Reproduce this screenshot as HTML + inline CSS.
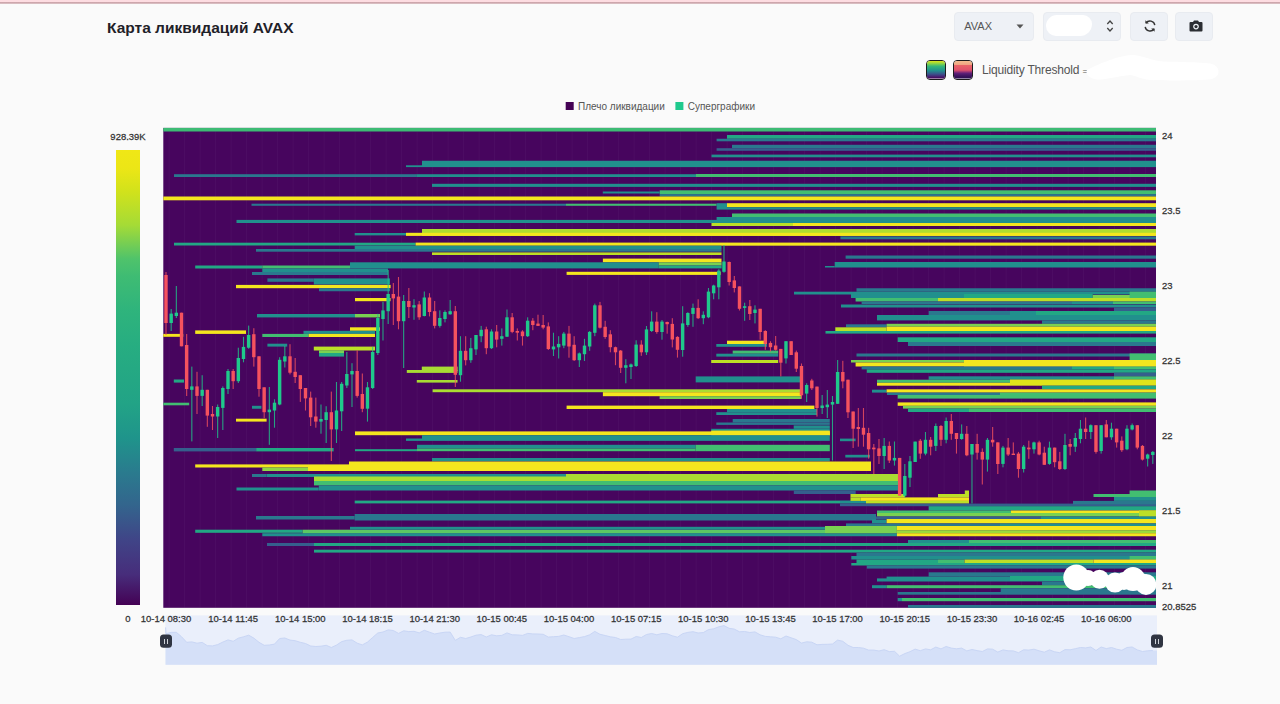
<!DOCTYPE html>
<html><head><meta charset="utf-8"><title>Карта ликвидаций AVAX</title>
<style>
html,body{margin:0;padding:0;}
body{width:1280px;height:704px;overflow:hidden;background:#fafafa;font-family:"Liberation Sans",sans-serif;position:relative;}
.topline{position:absolute;left:0;top:0;width:1280px;height:4.2px;background:linear-gradient(to bottom,#fddce1 0,#fddce1 2px,#cda6ac 2.2px,#cfa9af 3.3px,#ebe2e3 3.9px,#fafafa 4.2px);}
h1{position:absolute;left:107px;top:17.6px;margin:0;font-size:15.5px;line-height:20px;font-weight:bold;color:#1f2128;letter-spacing:0.01px;white-space:nowrap;}
.ctl{position:absolute;top:12px;height:28.6px;background:#eef1f6;border-radius:4px;border:1px solid #e8ebf0;box-sizing:border-box;}
.ctl span{position:absolute;font-size:11px;color:#555;top:7px;line-height:13px}
.thr{position:absolute;left:982px;top:63px;font-size:12px;line-height:14px;color:#555;white-space:nowrap;letter-spacing:-0.17px}
.thr i{font-style:normal;font-size:8.5px;position:relative;top:-0.5px}
.sw{position:absolute;top:60.3px;width:20px;height:19.5px;border-radius:4px;box-sizing:border-box;border:1.8px solid #1c1c1c;}
.blob{position:absolute;background:#fff;border-radius:50%;}
</style></head><body>
<div class="topline"></div>
<h1>Карта ликвидаций AVAX</h1>
<div class="ctl" style="left:954.3px;width:80px;"><span style="left:9px">AVAX</span>
<svg style="position:absolute;left:61px;top:11px" width="8" height="5" viewBox="0 0 8 5"><path d="M0.5 0.5 L7.5 0.5 L4 4.5 Z" fill="#555"/></svg></div>
<div class="ctl" style="left:1042.6px;width:78.6px;">
<div class="blob" style="left:2.5px;top:2.2px;width:46px;height:21px;border-radius:11px 9px 12px 10px"></div>
<svg style="position:absolute;left:62.5px;top:5.5px" width="8" height="14" viewBox="0 0 8 14"><path d="M1.3 5 L4 2 L6.7 5 M1.3 9 L4 12 L6.7 9" fill="none" stroke="#444" stroke-width="1.3"/></svg></div>
<div class="ctl" style="left:1130px;width:38.3px;">
<svg style="position:absolute;left:12px;top:6px" width="14" height="14" viewBox="0 0 14 14"><g transform="translate(14,0) scale(-1,1)"><path d="M2.2 6.2 A4.9 4.9 0 0 1 11 4 M11.8 7.8 A4.9 4.9 0 0 1 3 10" fill="none" stroke="#333" stroke-width="1.4"/><path d="M11.6 1.2 L11.6 4.6 L8.2 4.6 Z M2.4 12.8 L2.4 9.4 L5.8 9.4 Z" fill="#333"/></g></svg></div>
<div class="ctl" style="left:1174.6px;width:38.3px;">
<svg style="position:absolute;left:13px;top:7.3px" width="14" height="12" viewBox="0 0 14 12"><path d="M0.5 3 Q0.5 2 1.5 2 L4 2 L5 0.5 L9 0.5 L10 2 L12.5 2 Q13.5 2 13.5 3 L13.5 10.5 Q13.5 11.5 12.5 11.5 L1.5 11.5 Q0.5 11.5 0.5 10.5 Z" fill="#2b2e33"/><circle cx="7" cy="6.6" r="2.8" fill="#eff2f6"/><circle cx="7" cy="6.6" r="1.6" fill="#2b2e33"/></svg></div>
<svg class="sw" style="left:926px;" viewBox="0 0 20 20" preserveAspectRatio="none"><rect width="20" height="20" fill="url(#sw1)"/></svg>
<svg class="sw" style="left:953.4px;" viewBox="0 0 20 20" preserveAspectRatio="none"><rect width="20" height="20" fill="url(#sw2)"/></svg>
<div class="thr">Liquidity Threshold <i>=</i></div>
<svg style="position:absolute;left:0;top:0" width="1280" height="100"><path d="M1087 70 C1095 66 1115 56 1132 55 C1142 55 1152 61 1163 61.5 C1180 62 1198 62 1210 63.5 C1220 65 1222 76 1212 79 C1195 81 1165 80.5 1150 80 C1140 79 1135 75 1130 75 C1120 76 1105 80 1097 79.5 C1090 79 1085 74 1087 70 Z" fill="#fff"/></svg>
<svg width="1280" height="704" viewBox="0 0 1280 704" style="position:absolute;left:0;top:0">
<defs>
<linearGradient id="vir" x1="0" y1="0" x2="0" y2="1">
<stop offset="0" stop-color="#f0e716"/><stop offset="0.04" stop-color="#ece616"/><stop offset="0.09" stop-color="#d2e21b"/><stop offset="0.165" stop-color="#a5db36"/><stop offset="0.24" stop-color="#4fc36b"/><stop offset="0.277" stop-color="#3fbc73"/><stop offset="0.35" stop-color="#2fb47c"/><stop offset="0.43" stop-color="#27ad81"/><stop offset="0.558" stop-color="#22a386"/><stop offset="0.633" stop-color="#1f948b"/><stop offset="0.708" stop-color="#2a7b8e"/><stop offset="0.78" stop-color="#33658d"/><stop offset="0.858" stop-color="#404487"/><stop offset="0.933" stop-color="#472d7b"/><stop offset="1" stop-color="#440154"/>
</linearGradient>
<linearGradient id="sw1" x1="0" y1="0" x2="0" y2="1"><stop offset="0" stop-color="#dfe318"/><stop offset="0.12" stop-color="#9bd93c"/><stop offset="0.3" stop-color="#35b779"/><stop offset="0.55" stop-color="#21908d"/><stop offset="0.75" stop-color="#3b528b"/><stop offset="0.9" stop-color="#481f70"/><stop offset="1" stop-color="#440154"/></linearGradient>
<linearGradient id="sw2" x1="0" y1="0" x2="0" y2="1"><stop offset="0" stop-color="#f3bd8e"/><stop offset="0.2" stop-color="#f1a583"/><stop offset="0.24" stop-color="#ea6468"/><stop offset="0.52" stop-color="#e0526b"/><stop offset="0.6" stop-color="#a83a74"/><stop offset="0.7" stop-color="#5f2078"/><stop offset="0.85" stop-color="#3d1460"/><stop offset="1" stop-color="#2a0f50"/></linearGradient>
</defs>
<rect x="163.3" y="127.9" width="992.7" height="479.9" fill="#47055e"/>
<rect x="168.6" y="131.5" width="1" height="476" fill="#fff" fill-opacity="0.035"/>
<rect x="184.1" y="131.5" width="1" height="476" fill="#fff" fill-opacity="0.035"/>
<rect x="199.6" y="131.5" width="1" height="476" fill="#fff" fill-opacity="0.035"/>
<rect x="215.1" y="131.5" width="1" height="476" fill="#fff" fill-opacity="0.035"/>
<rect x="230.6" y="131.5" width="1" height="476" fill="#fff" fill-opacity="0.035"/>
<rect x="246.1" y="131.5" width="1" height="476" fill="#fff" fill-opacity="0.035"/>
<rect x="261.6" y="131.5" width="1" height="476" fill="#fff" fill-opacity="0.035"/>
<rect x="277.1" y="131.5" width="1" height="476" fill="#fff" fill-opacity="0.035"/>
<rect x="292.6" y="131.5" width="1" height="476" fill="#fff" fill-opacity="0.035"/>
<rect x="308.1" y="131.5" width="1" height="476" fill="#fff" fill-opacity="0.035"/>
<rect x="323.6" y="131.5" width="1" height="476" fill="#fff" fill-opacity="0.035"/>
<rect x="339.1" y="131.5" width="1" height="476" fill="#fff" fill-opacity="0.035"/>
<rect x="354.6" y="131.5" width="1" height="476" fill="#fff" fill-opacity="0.035"/>
<rect x="370.1" y="131.5" width="1" height="476" fill="#fff" fill-opacity="0.035"/>
<rect x="385.6" y="131.5" width="1" height="476" fill="#fff" fill-opacity="0.035"/>
<rect x="401.1" y="131.5" width="1" height="476" fill="#fff" fill-opacity="0.035"/>
<rect x="416.6" y="131.5" width="1" height="476" fill="#fff" fill-opacity="0.035"/>
<rect x="432.1" y="131.5" width="1" height="476" fill="#fff" fill-opacity="0.035"/>
<rect x="447.6" y="131.5" width="1" height="476" fill="#fff" fill-opacity="0.035"/>
<rect x="463.1" y="131.5" width="1" height="476" fill="#fff" fill-opacity="0.035"/>
<rect x="478.6" y="131.5" width="1" height="476" fill="#fff" fill-opacity="0.035"/>
<rect x="494.1" y="131.5" width="1" height="476" fill="#fff" fill-opacity="0.035"/>
<rect x="509.6" y="131.5" width="1" height="476" fill="#fff" fill-opacity="0.035"/>
<rect x="525.1" y="131.5" width="1" height="476" fill="#fff" fill-opacity="0.035"/>
<rect x="540.6" y="131.5" width="1" height="476" fill="#fff" fill-opacity="0.035"/>
<rect x="556.1" y="131.5" width="1" height="476" fill="#fff" fill-opacity="0.035"/>
<rect x="571.6" y="131.5" width="1" height="476" fill="#fff" fill-opacity="0.035"/>
<rect x="587.1" y="131.5" width="1" height="476" fill="#fff" fill-opacity="0.035"/>
<rect x="602.6" y="131.5" width="1" height="476" fill="#fff" fill-opacity="0.035"/>
<rect x="618.1" y="131.5" width="1" height="476" fill="#fff" fill-opacity="0.035"/>
<rect x="633.6" y="131.5" width="1" height="476" fill="#fff" fill-opacity="0.035"/>
<rect x="649.1" y="131.5" width="1" height="476" fill="#fff" fill-opacity="0.035"/>
<rect x="664.6" y="131.5" width="1" height="476" fill="#fff" fill-opacity="0.035"/>
<rect x="680.1" y="131.5" width="1" height="476" fill="#fff" fill-opacity="0.035"/>
<rect x="695.6" y="131.5" width="1" height="476" fill="#fff" fill-opacity="0.035"/>
<rect x="711.1" y="131.5" width="1" height="476" fill="#fff" fill-opacity="0.035"/>
<rect x="726.6" y="131.5" width="1" height="476" fill="#fff" fill-opacity="0.035"/>
<rect x="742.1" y="131.5" width="1" height="476" fill="#fff" fill-opacity="0.035"/>
<rect x="757.6" y="131.5" width="1" height="476" fill="#fff" fill-opacity="0.035"/>
<rect x="773.1" y="131.5" width="1" height="476" fill="#fff" fill-opacity="0.035"/>
<rect x="788.6" y="131.5" width="1" height="476" fill="#fff" fill-opacity="0.035"/>
<rect x="804.1" y="131.5" width="1" height="476" fill="#fff" fill-opacity="0.035"/>
<rect x="819.6" y="131.5" width="1" height="476" fill="#fff" fill-opacity="0.035"/>
<rect x="835.1" y="131.5" width="1" height="476" fill="#fff" fill-opacity="0.035"/>
<rect x="850.6" y="131.5" width="1" height="476" fill="#fff" fill-opacity="0.035"/>
<rect x="866.1" y="131.5" width="1" height="476" fill="#fff" fill-opacity="0.035"/>
<rect x="881.6" y="131.5" width="1" height="476" fill="#fff" fill-opacity="0.035"/>
<rect x="897.1" y="131.5" width="1" height="476" fill="#fff" fill-opacity="0.035"/>
<rect x="912.6" y="131.5" width="1" height="476" fill="#fff" fill-opacity="0.035"/>
<rect x="928.1" y="131.5" width="1" height="476" fill="#fff" fill-opacity="0.035"/>
<rect x="943.6" y="131.5" width="1" height="476" fill="#fff" fill-opacity="0.035"/>
<rect x="959.1" y="131.5" width="1" height="476" fill="#fff" fill-opacity="0.035"/>
<rect x="974.6" y="131.5" width="1" height="476" fill="#fff" fill-opacity="0.035"/>
<rect x="990.1" y="131.5" width="1" height="476" fill="#fff" fill-opacity="0.035"/>
<rect x="1005.6" y="131.5" width="1" height="476" fill="#fff" fill-opacity="0.035"/>
<rect x="1021.1" y="131.5" width="1" height="476" fill="#fff" fill-opacity="0.035"/>
<rect x="1036.6" y="131.5" width="1" height="476" fill="#fff" fill-opacity="0.035"/>
<rect x="1052.1" y="131.5" width="1" height="476" fill="#fff" fill-opacity="0.035"/>
<rect x="1067.6" y="131.5" width="1" height="476" fill="#fff" fill-opacity="0.035"/>
<rect x="1083.1" y="131.5" width="1" height="476" fill="#fff" fill-opacity="0.035"/>
<rect x="1098.6" y="131.5" width="1" height="476" fill="#fff" fill-opacity="0.035"/>
<rect x="1114.1" y="131.5" width="1" height="476" fill="#fff" fill-opacity="0.035"/>
<rect x="1129.6" y="131.5" width="1" height="476" fill="#fff" fill-opacity="0.035"/>
<rect x="1145.1" y="131.5" width="1" height="476" fill="#fff" fill-opacity="0.035"/>
<g shape-rendering="auto">
<rect x="163.3" y="127.90" width="992.7" height="3.60" fill="#3dbb74"/>
<rect x="727.0" y="135.00" width="429.0" height="3.75" fill="#22a884"/>
<rect x="716.6" y="138.75" width="439.4" height="2.55" fill="#2a788e"/>
<rect x="732.0" y="144.80" width="424.0" height="3.40" fill="#2a788e"/>
<rect x="716.6" y="148.20" width="439.4" height="2.60" fill="#355f8d"/>
<rect x="711.5" y="154.60" width="444.5" height="2.70" fill="#21908d"/>
<rect x="422.0" y="160.75" width="734.0" height="6.35" fill="#21908d"/>
<rect x="406.0" y="165.30" width="16.0" height="1.80" fill="#21908d"/>
<rect x="174.0" y="174.20" width="242.2" height="2.80" fill="#2a788e"/>
<rect x="416.2" y="174.20" width="279.8" height="2.80" fill="#21908d"/>
<rect x="696.0" y="174.00" width="460.0" height="3.00" fill="#42be71"/>
<rect x="432.0" y="183.80" width="724.0" height="3.10" fill="#21908d"/>
<rect x="659.7" y="190.30" width="496.3" height="3.80" fill="#42be71"/>
<rect x="602.8" y="191.50" width="56.9" height="2.00" fill="#21908d"/>
<rect x="659.7" y="194.10" width="496.3" height="2.40" fill="#2a788e"/>
<rect x="163.3" y="196.50" width="992.7" height="3.80" fill="#f4e61e"/>
<rect x="251.5" y="203.70" width="314.5" height="2.10" fill="#2a788e"/>
<rect x="566.0" y="203.70" width="150.6" height="2.10" fill="#42be71"/>
<rect x="716.6" y="203.20" width="10.4" height="6.40" fill="#21908d"/>
<rect x="727.0" y="203.20" width="429.0" height="4.00" fill="#f4e61e"/>
<rect x="727.0" y="207.20" width="429.0" height="2.40" fill="#21908d"/>
<rect x="732.0" y="213.50" width="424.0" height="3.50" fill="#42be71"/>
<rect x="716.6" y="217.00" width="439.4" height="4.25" fill="#21908d"/>
<rect x="236.5" y="219.90" width="919.5" height="3.10" fill="#21908d"/>
<rect x="711.5" y="223.00" width="81.5" height="3.00" fill="#bddf26"/>
<rect x="793.0" y="223.00" width="363.0" height="3.00" fill="#f4e61e"/>
<rect x="422.0" y="229.00" width="734.0" height="6.90" fill="#afdd2f"/>
<rect x="406.0" y="232.80" width="750.0" height="3.10" fill="#f4e61e"/>
<rect x="354.7" y="233.00" width="51.3" height="2.40" fill="#21908d"/>
<rect x="840.4" y="236.40" width="315.6" height="2.90" fill="#2a788e"/>
<rect x="174.0" y="242.70" width="241.6" height="2.80" fill="#22a884"/>
<rect x="415.6" y="242.60" width="740.4" height="3.10" fill="#f4e61e"/>
<rect x="354.7" y="245.70" width="366.8" height="3.30" fill="#21908d"/>
<rect x="256.0" y="249.00" width="465.5" height="2.70" fill="#2a788e"/>
<rect x="432.0" y="252.40" width="289.5" height="2.60" fill="#bddf26"/>
<rect x="845.6" y="255.50" width="310.4" height="3.20" fill="#2a788e"/>
<rect x="602.9" y="258.60" width="118.6" height="3.70" fill="#f4e61e"/>
<rect x="350.0" y="262.30" width="308.8" height="6.10" fill="#21908d"/>
<rect x="658.8" y="262.30" width="62.8" height="3.20" fill="#7ad151"/>
<rect x="658.8" y="265.50" width="62.8" height="2.90" fill="#22a884"/>
<rect x="195.2" y="265.50" width="67.1" height="3.00" fill="#22a884"/>
<rect x="262.3" y="265.50" width="87.7" height="3.00" fill="#42be71"/>
<rect x="834.7" y="262.00" width="321.3" height="5.50" fill="#21908d"/>
<rect x="825.0" y="266.00" width="9.7" height="1.50" fill="#21908d"/>
<rect x="262.3" y="268.50" width="125.7" height="3.50" fill="#21908d"/>
<rect x="252.0" y="272.00" width="136.0" height="3.00" fill="#2a788e"/>
<rect x="566.6" y="271.80" width="154.0" height="3.10" fill="#f4e61e"/>
<rect x="267.4" y="278.40" width="46.4" height="3.40" fill="#2a788e"/>
<rect x="313.8" y="278.40" width="76.2" height="6.10" fill="#21908d"/>
<rect x="236.0" y="284.90" width="154.6" height="3.30" fill="#f4e61e"/>
<rect x="319.0" y="288.20" width="71.0" height="3.05" fill="#2a788e"/>
<rect x="355.0" y="298.00" width="35.5" height="3.20" fill="#f4e61e"/>
<rect x="257.0" y="314.00" width="98.0" height="3.40" fill="#21908d"/>
<rect x="355.0" y="314.00" width="25.0" height="3.40" fill="#7ad151"/>
<rect x="350.0" y="327.30" width="30.0" height="3.50" fill="#f4e61e"/>
<rect x="195.2" y="330.40" width="50.8" height="3.50" fill="#f4e61e"/>
<rect x="163.3" y="333.90" width="19.9" height="2.90" fill="#f4e61e"/>
<rect x="303.5" y="330.80" width="71.5" height="3.10" fill="#21908d"/>
<rect x="262.3" y="333.90" width="46.4" height="3.10" fill="#42be71"/>
<rect x="308.7" y="333.90" width="66.3" height="3.10" fill="#f4e61e"/>
<rect x="267.4" y="343.70" width="19.8" height="2.90" fill="#21908d"/>
<rect x="313.8" y="346.60" width="61.2" height="3.90" fill="#bddf26"/>
<rect x="319.0" y="350.30" width="25.0" height="2.70" fill="#7ad151"/>
<rect x="319.0" y="353.00" width="25.0" height="3.60" fill="#22a884"/>
<rect x="421.8" y="366.60" width="35.8" height="4.20" fill="#a8db34"/>
<rect x="406.8" y="370.00" width="50.7" height="2.90" fill="#a8db34"/>
<rect x="416.8" y="380.00" width="40.7" height="2.60" fill="#a8db34"/>
<rect x="173.8" y="379.50" width="10.2" height="3.10" fill="#22a884"/>
<rect x="163.3" y="402.70" width="25.9" height="2.60" fill="#42be71"/>
<rect x="252.0" y="405.80" width="9.4" height="2.95" fill="#21908d"/>
<rect x="236.0" y="418.70" width="30.6" height="2.90" fill="#f4e61e"/>
<rect x="727.0" y="340.70" width="40.0" height="3.30" fill="#f4e61e"/>
<rect x="716.3" y="344.00" width="50.7" height="2.80" fill="#21908d"/>
<rect x="732.7" y="350.60" width="45.5" height="3.10" fill="#42be71"/>
<rect x="716.3" y="353.70" width="61.9" height="2.90" fill="#21908d"/>
<rect x="711.2" y="360.00" width="67.0" height="3.00" fill="#bddf26"/>
<rect x="695.7" y="376.40" width="104.8" height="6.00" fill="#21908d"/>
<rect x="432.6" y="389.30" width="368.8" height="2.90" fill="#abdc32"/>
<rect x="602.9" y="392.20" width="198.5" height="4.00" fill="#f4e61e"/>
<rect x="659.6" y="396.20" width="141.8" height="2.80" fill="#7ad151"/>
<rect x="566.6" y="405.60" width="247.8" height="3.40" fill="#f4e61e"/>
<rect x="727.0" y="409.00" width="90.0" height="3.20" fill="#21908d"/>
<rect x="716.3" y="412.20" width="100.7" height="2.80" fill="#21908d"/>
<rect x="732.7" y="419.00" width="97.1" height="3.50" fill="#2a788e"/>
<rect x="716.3" y="422.50" width="113.5" height="2.40" fill="#2a788e"/>
<rect x="793.7" y="425.40" width="36.1" height="3.40" fill="#21908d"/>
<rect x="711.2" y="428.80" width="118.6" height="2.60" fill="#21908d"/>
<rect x="355.0" y="431.40" width="474.8" height="3.80" fill="#f4e61e"/>
<rect x="711.2" y="430.60" width="118.6" height="5.00" fill="#f4e61e"/>
<rect x="422.0" y="435.20" width="407.8" height="5.70" fill="#21908d"/>
<rect x="406.0" y="438.50" width="16.0" height="2.40" fill="#21908d"/>
<rect x="173.8" y="448.00" width="82.5" height="3.40" fill="#355f8d"/>
<rect x="256.2" y="448.00" width="77.4" height="3.40" fill="#22a884"/>
<rect x="355.0" y="449.20" width="62.0" height="2.00" fill="#22a884"/>
<rect x="417.0" y="444.80" width="278.7" height="3.80" fill="#21908d"/>
<rect x="417.0" y="448.60" width="278.7" height="2.60" fill="#42be71"/>
<rect x="695.7" y="444.80" width="134.1" height="6.40" fill="#42be71"/>
<rect x="432.0" y="458.00" width="397.8" height="3.30" fill="#21908d"/>
<rect x="349.0" y="461.50" width="522.0" height="9.50" fill="#f4e61e"/>
<rect x="195.2" y="464.40" width="112.8" height="3.10" fill="#f4e61e"/>
<rect x="262.3" y="467.50" width="45.7" height="3.50" fill="#8fd744"/>
<rect x="308.0" y="464.40" width="41.0" height="6.60" fill="#f4e61e"/>
<rect x="252.0" y="474.00" width="14.6" height="3.00" fill="#2a788e"/>
<rect x="266.6" y="474.00" width="299.4" height="3.00" fill="#21908d"/>
<rect x="566.0" y="474.00" width="332.6" height="7.00" fill="#aadc32"/>
<rect x="314.0" y="476.50" width="252.0" height="4.50" fill="#aadc32"/>
<rect x="314.0" y="481.00" width="584.6" height="4.40" fill="#42be71"/>
<rect x="318.8" y="485.40" width="579.9" height="5.10" fill="#21908d"/>
<rect x="236.5" y="487.50" width="82.2" height="3.00" fill="#21908d"/>
<rect x="793.8" y="490.50" width="61.9" height="3.50" fill="#355f8d"/>
<rect x="354.7" y="500.60" width="485.3" height="2.80" fill="#22a884"/>
<rect x="840.0" y="500.50" width="26.0" height="3.10" fill="#21908d"/>
<rect x="256.0" y="516.00" width="98.7" height="3.50" fill="#2a788e"/>
<rect x="354.7" y="514.00" width="521.3" height="6.50" fill="#2a788e"/>
<rect x="195.2" y="529.70" width="107.5" height="3.10" fill="#22a884"/>
<rect x="302.7" y="529.70" width="522.3" height="3.80" fill="#5cc863"/>
<rect x="350.0" y="526.80" width="475.0" height="2.90" fill="#21908d"/>
<rect x="262.3" y="533.20" width="634.6" height="3.05" fill="#21908d"/>
<rect x="825.0" y="526.00" width="71.9" height="7.20" fill="#7ad151"/>
<rect x="896.9" y="526.00" width="259.1" height="4.20" fill="#f4e61e"/>
<rect x="896.9" y="530.20" width="259.1" height="3.00" fill="#9bd93c"/>
<rect x="896.9" y="533.20" width="259.1" height="3.05" fill="#f4e61e"/>
<rect x="267.0" y="543.00" width="47.0" height="3.00" fill="#355f8d"/>
<rect x="314.0" y="543.00" width="842.0" height="3.00" fill="#22a884"/>
<rect x="314.0" y="549.70" width="842.0" height="2.90" fill="#22a884"/>
<rect x="856.5" y="288.25" width="299.5" height="3.45" fill="#2a788e"/>
<rect x="794.0" y="291.70" width="362.0" height="2.80" fill="#21908d"/>
<rect x="851.0" y="294.00" width="113.0" height="4.00" fill="#21908d"/>
<rect x="964.0" y="294.00" width="128.7" height="4.00" fill="#22a884"/>
<rect x="1092.7" y="295.00" width="63.3" height="3.00" fill="#7ad151"/>
<rect x="1129.6" y="291.70" width="26.4" height="6.30" fill="#42be71"/>
<rect x="855.6" y="298.00" width="82.4" height="3.50" fill="#42be71"/>
<rect x="938.0" y="298.00" width="218.0" height="3.50" fill="#bddf26"/>
<rect x="861.6" y="301.50" width="210.4" height="2.50" fill="#2a788e"/>
<rect x="1072.0" y="301.50" width="41.0" height="2.50" fill="#21908d"/>
<rect x="1113.0" y="301.50" width="43.0" height="2.50" fill="#42be71"/>
<rect x="841.0" y="304.50" width="315.0" height="3.00" fill="#21908d"/>
<rect x="1114.0" y="307.50" width="42.0" height="3.50" fill="#355f8d"/>
<rect x="928.7" y="311.00" width="81.3" height="4.00" fill="#2a788e"/>
<rect x="1010.0" y="311.00" width="26.0" height="6.00" fill="#21908d"/>
<rect x="1036.0" y="311.00" width="120.0" height="6.00" fill="#22a884"/>
<rect x="877.0" y="315.00" width="279.0" height="5.40" fill="#21908d"/>
<rect x="1042.0" y="320.40" width="114.0" height="3.40" fill="#2a788e"/>
<rect x="846.0" y="324.30" width="40.6" height="3.00" fill="#2a788e"/>
<rect x="886.6" y="323.80" width="269.4" height="2.95" fill="#7ad151"/>
<rect x="835.3" y="327.30" width="51.3" height="3.70" fill="#bddf26"/>
<rect x="886.6" y="326.75" width="269.4" height="4.45" fill="#f4e61e"/>
<rect x="825.5" y="331.00" width="330.5" height="2.60" fill="#22a884"/>
<rect x="897.7" y="337.30" width="258.3" height="4.70" fill="#22a884"/>
<rect x="908.0" y="342.00" width="248.0" height="4.00" fill="#2a788e"/>
<rect x="856.5" y="353.50" width="299.5" height="3.00" fill="#2a788e"/>
<rect x="1129.6" y="353.50" width="26.4" height="6.50" fill="#42be71"/>
<rect x="851.0" y="360.00" width="113.0" height="2.50" fill="#7ad151"/>
<rect x="855.6" y="362.50" width="300.4" height="4.00" fill="#f4e61e"/>
<rect x="964.0" y="360.00" width="192.0" height="6.50" fill="#f4e61e"/>
<rect x="861.6" y="366.50" width="210.4" height="2.90" fill="#2a788e"/>
<rect x="1072.0" y="366.50" width="42.0" height="2.90" fill="#22a884"/>
<rect x="1114.0" y="366.50" width="42.0" height="2.90" fill="#42be71"/>
<rect x="866.8" y="369.40" width="289.2" height="3.40" fill="#22a884"/>
<rect x="1114.0" y="372.80" width="42.0" height="3.50" fill="#355f8d"/>
<rect x="928.7" y="376.30" width="185.3" height="3.40" fill="#21908d"/>
<rect x="1114.0" y="376.30" width="42.0" height="3.40" fill="#42be71"/>
<rect x="877.0" y="379.70" width="133.0" height="3.10" fill="#42be71"/>
<rect x="877.0" y="382.80" width="133.0" height="2.90" fill="#f4e61e"/>
<rect x="1010.0" y="379.50" width="146.0" height="6.20" fill="#e0e31a"/>
<rect x="1042.0" y="385.70" width="114.0" height="3.30" fill="#22a884"/>
<rect x="872.0" y="389.70" width="14.6" height="2.90" fill="#21908d"/>
<rect x="886.6" y="389.30" width="269.4" height="3.30" fill="#f4e61e"/>
<rect x="887.0" y="392.60" width="113.0" height="2.40" fill="#2a788e"/>
<rect x="1000.0" y="392.60" width="156.0" height="2.40" fill="#42be71"/>
<rect x="897.7" y="395.00" width="258.3" height="3.60" fill="#42be71"/>
<rect x="897.7" y="402.40" width="258.3" height="3.40" fill="#f4e61e"/>
<rect x="903.0" y="405.80" width="253.0" height="2.80" fill="#7ad151"/>
<rect x="908.0" y="408.60" width="61.0" height="3.40" fill="#22a884"/>
<rect x="969.0" y="408.60" width="187.0" height="3.40" fill="#42be71"/>
<rect x="840.0" y="438.60" width="15.6" height="2.60" fill="#21908d"/>
<rect x="845.3" y="454.80" width="24.7" height="2.70" fill="#21908d"/>
<rect x="850.5" y="494.00" width="54.5" height="3.40" fill="#bddf26"/>
<rect x="938.0" y="494.00" width="31.0" height="3.40" fill="#bddf26"/>
<rect x="964.8" y="490.50" width="4.2" height="3.50" fill="#bddf26"/>
<rect x="850.5" y="497.40" width="10.3" height="3.50" fill="#bddf26"/>
<rect x="860.8" y="497.40" width="108.2" height="3.50" fill="#f4e61e"/>
<rect x="866.0" y="500.90" width="103.0" height="2.70" fill="#bddf26"/>
<rect x="840.0" y="503.60" width="316.0" height="2.60" fill="#355f8d"/>
<rect x="928.7" y="506.20" width="227.3" height="4.30" fill="#22a884"/>
<rect x="877.0" y="510.50" width="134.0" height="2.50" fill="#42be71"/>
<rect x="1011.0" y="510.50" width="145.0" height="3.00" fill="#f4e61e"/>
<rect x="877.0" y="513.00" width="279.0" height="3.50" fill="#7ad151"/>
<rect x="1139.0" y="510.50" width="17.0" height="6.00" fill="#bddf26"/>
<rect x="876.0" y="516.50" width="165.0" height="2.50" fill="#355f8d"/>
<rect x="1041.0" y="516.50" width="115.0" height="2.50" fill="#21908d"/>
<rect x="872.0" y="519.50" width="14.6" height="3.90" fill="#21908d"/>
<rect x="886.6" y="519.00" width="269.4" height="4.40" fill="#f4e61e"/>
<rect x="846.0" y="523.40" width="154.0" height="2.60" fill="#2a788e"/>
<rect x="1000.0" y="523.40" width="156.0" height="2.60" fill="#21908d"/>
<rect x="908.0" y="540.00" width="61.0" height="3.00" fill="#21908d"/>
<rect x="969.0" y="540.00" width="187.0" height="3.00" fill="#42be71"/>
<rect x="856.5" y="552.60" width="299.5" height="3.40" fill="#2a788e"/>
<rect x="851.3" y="556.00" width="304.7" height="3.50" fill="#21908d"/>
<rect x="1129.6" y="556.00" width="26.4" height="3.50" fill="#42be71"/>
<rect x="856.5" y="559.50" width="81.5" height="3.50" fill="#22a884"/>
<rect x="938.0" y="559.50" width="26.6" height="3.50" fill="#42be71"/>
<rect x="964.6" y="559.50" width="128.9" height="3.50" fill="#bddf26"/>
<rect x="1093.5" y="559.50" width="62.5" height="3.50" fill="#f4e61e"/>
<rect x="851.3" y="563.00" width="304.7" height="2.50" fill="#22a884"/>
<rect x="866.8" y="565.50" width="289.2" height="3.10" fill="#2a788e"/>
<rect x="928.7" y="572.30" width="227.3" height="4.30" fill="#2a788e"/>
<rect x="886.6" y="576.60" width="269.4" height="2.60" fill="#21908d"/>
<rect x="877.0" y="578.40" width="279.0" height="3.10" fill="#21908d"/>
<rect x="1010.0" y="576.00" width="146.0" height="5.00" fill="#22a884"/>
<rect x="1042.0" y="581.50" width="114.0" height="3.70" fill="#2a788e"/>
<rect x="872.0" y="585.20" width="14.6" height="3.00" fill="#21908d"/>
<rect x="886.6" y="585.20" width="269.4" height="3.00" fill="#42be71"/>
<rect x="1000.7" y="588.20" width="155.3" height="3.80" fill="#2a788e"/>
<rect x="897.7" y="592.00" width="258.3" height="2.70" fill="#2a788e"/>
<rect x="897.7" y="598.00" width="4.3" height="3.20" fill="#21908d"/>
<rect x="902.0" y="598.00" width="254.0" height="3.20" fill="#42be71"/>
<rect x="908.0" y="605.00" width="248.0" height="2.90" fill="#2a788e"/>
<rect x="1129.6" y="490.50" width="26.4" height="3.50" fill="#42be71"/>
<rect x="1093.5" y="494.00" width="62.5" height="3.00" fill="#42be71"/>
<rect x="1114.0" y="497.00" width="42.0" height="3.90" fill="#21908d"/>
<rect x="1073.0" y="500.90" width="83.0" height="3.40" fill="#2a788e"/>
</g>
<g>
<rect x="165.45" y="272.0" width="1.1" height="63.0" fill="#f5525e" fill-opacity="0.8"/>
<rect x="164.30" y="275.0" width="3.4" height="48.0" fill="#f5525e"/>
<rect x="170.62" y="309.0" width="1.1" height="22.0" fill="#1fc98b" fill-opacity="0.8"/>
<rect x="169.47" y="313.6" width="3.4" height="9.4" fill="#1fc98b"/>
<rect x="175.78" y="286.0" width="1.1" height="32.0" fill="#1fc98b" fill-opacity="0.8"/>
<rect x="174.63" y="312.7" width="3.4" height="3.3" fill="#1fc98b"/>
<rect x="180.95" y="312.7" width="1.1" height="33.6" fill="#f5525e" fill-opacity="0.8"/>
<rect x="179.80" y="312.7" width="3.4" height="33.6" fill="#f5525e"/>
<rect x="186.12" y="334.0" width="1.1" height="62.0" fill="#f5525e" fill-opacity="0.8"/>
<rect x="184.97" y="345.0" width="3.4" height="44.0" fill="#f5525e"/>
<rect x="191.28" y="366.6" width="1.1" height="74.8" fill="#1fc98b" fill-opacity="0.8"/>
<rect x="190.13" y="386.4" width="3.4" height="3.4" fill="#1fc98b"/>
<rect x="196.45" y="371.8" width="1.1" height="42.2" fill="#f5525e" fill-opacity="0.8"/>
<rect x="195.30" y="386.4" width="3.4" height="9.5" fill="#f5525e"/>
<rect x="201.62" y="375.2" width="1.1" height="30.8" fill="#1fc98b" fill-opacity="0.8"/>
<rect x="200.47" y="389.8" width="3.4" height="6.1" fill="#1fc98b"/>
<rect x="206.78" y="389.8" width="1.1" height="37.0" fill="#f5525e" fill-opacity="0.8"/>
<rect x="205.63" y="389.8" width="3.4" height="25.8" fill="#f5525e"/>
<rect x="211.95" y="406.0" width="1.1" height="24.0" fill="#f5525e" fill-opacity="0.8"/>
<rect x="210.80" y="414.0" width="3.4" height="2.5" fill="#f5525e"/>
<rect x="217.11" y="404.5" width="1.1" height="33.5" fill="#1fc98b" fill-opacity="0.8"/>
<rect x="215.97" y="407.0" width="3.4" height="9.5" fill="#1fc98b"/>
<rect x="222.28" y="386.4" width="1.1" height="43.6" fill="#1fc98b" fill-opacity="0.8"/>
<rect x="221.13" y="388.0" width="3.4" height="19.9" fill="#1fc98b"/>
<rect x="227.45" y="369.0" width="1.1" height="25.0" fill="#1fc98b" fill-opacity="0.8"/>
<rect x="226.30" y="371.0" width="3.4" height="18.0" fill="#1fc98b"/>
<rect x="232.61" y="369.0" width="1.1" height="20.0" fill="#f5525e" fill-opacity="0.8"/>
<rect x="231.46" y="371.0" width="3.4" height="10.2" fill="#f5525e"/>
<rect x="237.78" y="347.7" width="1.1" height="35.3" fill="#1fc98b" fill-opacity="0.8"/>
<rect x="236.63" y="358.0" width="3.4" height="23.2" fill="#1fc98b"/>
<rect x="242.95" y="336.8" width="1.1" height="25.5" fill="#1fc98b" fill-opacity="0.8"/>
<rect x="241.80" y="346.9" width="3.4" height="12.1" fill="#1fc98b"/>
<rect x="248.11" y="325.6" width="1.1" height="23.2" fill="#1fc98b" fill-opacity="0.8"/>
<rect x="246.96" y="335.0" width="3.4" height="12.7" fill="#1fc98b"/>
<rect x="253.28" y="328.2" width="1.1" height="38.4" fill="#f5525e" fill-opacity="0.8"/>
<rect x="252.13" y="334.2" width="3.4" height="23.0" fill="#f5525e"/>
<rect x="258.45" y="356.3" width="1.1" height="40.4" fill="#f5525e" fill-opacity="0.8"/>
<rect x="257.30" y="356.3" width="3.4" height="32.7" fill="#f5525e"/>
<rect x="263.61" y="387.3" width="1.1" height="30.9" fill="#f5525e" fill-opacity="0.8"/>
<rect x="262.46" y="387.3" width="3.4" height="24.9" fill="#f5525e"/>
<rect x="268.78" y="387.0" width="1.1" height="57.8" fill="#1fc98b" fill-opacity="0.8"/>
<rect x="267.63" y="409.6" width="3.4" height="2.6" fill="#1fc98b"/>
<rect x="273.95" y="399.3" width="1.1" height="28.4" fill="#1fc98b" fill-opacity="0.8"/>
<rect x="272.80" y="402.7" width="3.4" height="7.8" fill="#1fc98b"/>
<rect x="279.11" y="357.2" width="1.1" height="48.1" fill="#1fc98b" fill-opacity="0.8"/>
<rect x="277.96" y="359.8" width="3.4" height="44.7" fill="#1fc98b"/>
<rect x="284.28" y="346.0" width="1.1" height="21.5" fill="#1fc98b" fill-opacity="0.8"/>
<rect x="283.13" y="356.3" width="3.4" height="5.2" fill="#1fc98b"/>
<rect x="289.45" y="344.2" width="1.1" height="30.2" fill="#f5525e" fill-opacity="0.8"/>
<rect x="288.30" y="356.3" width="3.4" height="16.4" fill="#f5525e"/>
<rect x="294.61" y="358.0" width="1.1" height="25.0" fill="#f5525e" fill-opacity="0.8"/>
<rect x="293.46" y="371.8" width="3.4" height="5.2" fill="#f5525e"/>
<rect x="299.78" y="375.2" width="1.1" height="26.7" fill="#f5525e" fill-opacity="0.8"/>
<rect x="298.63" y="375.2" width="3.4" height="13.8" fill="#f5525e"/>
<rect x="304.95" y="388.0" width="1.1" height="22.5" fill="#f5525e" fill-opacity="0.8"/>
<rect x="303.80" y="388.0" width="3.4" height="10.4" fill="#f5525e"/>
<rect x="310.11" y="391.6" width="1.1" height="34.4" fill="#f5525e" fill-opacity="0.8"/>
<rect x="308.96" y="397.6" width="3.4" height="19.7" fill="#f5525e"/>
<rect x="315.28" y="397.6" width="1.1" height="30.1" fill="#f5525e" fill-opacity="0.8"/>
<rect x="314.13" y="416.5" width="3.4" height="5.1" fill="#f5525e"/>
<rect x="320.44" y="404.5" width="1.1" height="29.2" fill="#1fc98b" fill-opacity="0.8"/>
<rect x="319.30" y="419.0" width="3.4" height="2.6" fill="#1fc98b"/>
<rect x="325.61" y="406.2" width="1.1" height="36.8" fill="#1fc98b" fill-opacity="0.8"/>
<rect x="324.46" y="412.2" width="3.4" height="7.8" fill="#1fc98b"/>
<rect x="330.78" y="391.6" width="1.1" height="69.4" fill="#f5525e" fill-opacity="0.8"/>
<rect x="329.63" y="412.2" width="3.4" height="17.2" fill="#f5525e"/>
<rect x="335.94" y="382.0" width="1.1" height="61.0" fill="#1fc98b" fill-opacity="0.8"/>
<rect x="334.79" y="410.5" width="3.4" height="18.9" fill="#1fc98b"/>
<rect x="341.11" y="382.0" width="1.1" height="49.0" fill="#1fc98b" fill-opacity="0.8"/>
<rect x="339.96" y="383.8" width="3.4" height="27.5" fill="#1fc98b"/>
<rect x="346.28" y="352.0" width="1.1" height="36.0" fill="#1fc98b" fill-opacity="0.8"/>
<rect x="345.13" y="374.0" width="3.4" height="11.5" fill="#1fc98b"/>
<rect x="351.44" y="363.2" width="1.1" height="43.8" fill="#1fc98b" fill-opacity="0.8"/>
<rect x="350.29" y="371.0" width="3.4" height="3.4" fill="#1fc98b"/>
<rect x="356.61" y="350.3" width="1.1" height="47.3" fill="#f5525e" fill-opacity="0.8"/>
<rect x="355.46" y="371.0" width="3.4" height="24.9" fill="#f5525e"/>
<rect x="361.78" y="373.5" width="1.1" height="38.7" fill="#f5525e" fill-opacity="0.8"/>
<rect x="360.63" y="394.0" width="3.4" height="14.8" fill="#f5525e"/>
<rect x="366.94" y="382.0" width="1.1" height="39.6" fill="#1fc98b" fill-opacity="0.8"/>
<rect x="365.79" y="387.3" width="3.4" height="21.4" fill="#1fc98b"/>
<rect x="372.11" y="346.9" width="1.1" height="42.1" fill="#1fc98b" fill-opacity="0.8"/>
<rect x="370.96" y="352.0" width="3.4" height="36.0" fill="#1fc98b"/>
<rect x="377.28" y="313.8" width="1.1" height="41.2" fill="#1fc98b" fill-opacity="0.8"/>
<rect x="376.13" y="318.0" width="3.4" height="35.0" fill="#1fc98b"/>
<rect x="382.44" y="301.8" width="1.1" height="38.7" fill="#1fc98b" fill-opacity="0.8"/>
<rect x="381.29" y="310.4" width="3.4" height="8.6" fill="#1fc98b"/>
<rect x="387.61" y="270.0" width="1.1" height="54.0" fill="#1fc98b" fill-opacity="0.8"/>
<rect x="386.46" y="294.0" width="3.4" height="17.2" fill="#1fc98b"/>
<rect x="392.78" y="283.0" width="1.1" height="42.0" fill="#f5525e" fill-opacity="0.8"/>
<rect x="391.63" y="294.0" width="3.4" height="4.4" fill="#f5525e"/>
<rect x="397.94" y="277.0" width="1.1" height="52.3" fill="#f5525e" fill-opacity="0.8"/>
<rect x="396.79" y="296.6" width="3.4" height="24.6" fill="#f5525e"/>
<rect x="403.11" y="295.0" width="1.1" height="73.0" fill="#1fc98b" fill-opacity="0.8"/>
<rect x="401.96" y="301.0" width="3.4" height="20.2" fill="#1fc98b"/>
<rect x="408.28" y="288.0" width="1.1" height="30.0" fill="#f5525e" fill-opacity="0.8"/>
<rect x="407.13" y="301.0" width="3.4" height="6.0" fill="#f5525e"/>
<rect x="413.44" y="299.2" width="1.1" height="20.6" fill="#1fc98b" fill-opacity="0.8"/>
<rect x="412.29" y="305.2" width="3.4" height="2.3" fill="#1fc98b"/>
<rect x="418.61" y="301.0" width="1.1" height="18.8" fill="#f5525e" fill-opacity="0.8"/>
<rect x="417.46" y="304.4" width="3.4" height="12.9" fill="#f5525e"/>
<rect x="423.77" y="291.5" width="1.1" height="24.9" fill="#1fc98b" fill-opacity="0.8"/>
<rect x="422.62" y="297.5" width="3.4" height="18.5" fill="#1fc98b"/>
<rect x="428.94" y="293.2" width="1.1" height="23.2" fill="#f5525e" fill-opacity="0.8"/>
<rect x="427.79" y="297.5" width="3.4" height="14.5" fill="#f5525e"/>
<rect x="434.11" y="301.0" width="1.1" height="27.4" fill="#f5525e" fill-opacity="0.8"/>
<rect x="432.96" y="311.2" width="3.4" height="14.6" fill="#f5525e"/>
<rect x="439.27" y="310.4" width="1.1" height="17.2" fill="#1fc98b" fill-opacity="0.8"/>
<rect x="438.12" y="318.0" width="3.4" height="7.9" fill="#1fc98b"/>
<rect x="444.44" y="310.4" width="1.1" height="12.0" fill="#1fc98b" fill-opacity="0.8"/>
<rect x="443.29" y="312.0" width="3.4" height="7.0" fill="#1fc98b"/>
<rect x="449.61" y="300.0" width="1.1" height="14.7" fill="#1fc98b" fill-opacity="0.8"/>
<rect x="448.46" y="311.2" width="3.4" height="3.1" fill="#1fc98b"/>
<rect x="454.77" y="306.0" width="1.1" height="81.0" fill="#f5525e" fill-opacity="0.8"/>
<rect x="453.62" y="311.2" width="3.4" height="63.6" fill="#f5525e"/>
<rect x="459.94" y="336.2" width="1.1" height="45.5" fill="#1fc98b" fill-opacity="0.8"/>
<rect x="458.79" y="350.8" width="3.4" height="24.4" fill="#1fc98b"/>
<rect x="465.11" y="336.2" width="1.1" height="29.2" fill="#f5525e" fill-opacity="0.8"/>
<rect x="463.96" y="350.8" width="3.4" height="9.4" fill="#f5525e"/>
<rect x="470.27" y="337.9" width="1.1" height="24.9" fill="#1fc98b" fill-opacity="0.8"/>
<rect x="469.12" y="348.2" width="3.4" height="12.0" fill="#1fc98b"/>
<rect x="475.44" y="335.0" width="1.1" height="20.0" fill="#1fc98b" fill-opacity="0.8"/>
<rect x="474.29" y="335.0" width="3.4" height="14.4" fill="#1fc98b"/>
<rect x="480.61" y="325.9" width="1.1" height="16.3" fill="#1fc98b" fill-opacity="0.8"/>
<rect x="479.46" y="329.8" width="3.4" height="6.4" fill="#1fc98b"/>
<rect x="485.77" y="326.7" width="1.1" height="27.5" fill="#f5525e" fill-opacity="0.8"/>
<rect x="484.62" y="329.3" width="3.4" height="18.9" fill="#f5525e"/>
<rect x="490.94" y="329.3" width="1.1" height="19.7" fill="#1fc98b" fill-opacity="0.8"/>
<rect x="489.79" y="331.5" width="3.4" height="16.7" fill="#1fc98b"/>
<rect x="496.11" y="325.0" width="1.1" height="22.3" fill="#f5525e" fill-opacity="0.8"/>
<rect x="494.96" y="331.5" width="3.4" height="8.1" fill="#f5525e"/>
<rect x="501.27" y="328.4" width="1.1" height="17.2" fill="#1fc98b" fill-opacity="0.8"/>
<rect x="500.12" y="336.2" width="3.4" height="2.6" fill="#1fc98b"/>
<rect x="506.44" y="309.5" width="1.1" height="27.5" fill="#1fc98b" fill-opacity="0.8"/>
<rect x="505.29" y="317.3" width="3.4" height="19.4" fill="#1fc98b"/>
<rect x="511.61" y="313.0" width="1.1" height="20.2" fill="#f5525e" fill-opacity="0.8"/>
<rect x="510.46" y="317.3" width="3.4" height="14.6" fill="#f5525e"/>
<rect x="516.77" y="328.4" width="1.1" height="12.1" fill="#f5525e" fill-opacity="0.8"/>
<rect x="515.62" y="331.0" width="3.4" height="1.7" fill="#f5525e"/>
<rect x="521.94" y="330.2" width="1.1" height="15.4" fill="#f5525e" fill-opacity="0.8"/>
<rect x="520.79" y="331.5" width="3.4" height="4.7" fill="#f5525e"/>
<rect x="527.11" y="317.3" width="1.1" height="19.7" fill="#1fc98b" fill-opacity="0.8"/>
<rect x="525.95" y="320.7" width="3.4" height="15.5" fill="#1fc98b"/>
<rect x="532.27" y="318.1" width="1.1" height="12.1" fill="#f5525e" fill-opacity="0.8"/>
<rect x="531.12" y="320.7" width="3.4" height="4.3" fill="#f5525e"/>
<rect x="537.44" y="314.7" width="1.1" height="11.2" fill="#f5525e" fill-opacity="0.8"/>
<rect x="536.29" y="323.6" width="3.4" height="2.3" fill="#f5525e"/>
<rect x="542.60" y="315.0" width="1.1" height="14.3" fill="#f5525e" fill-opacity="0.8"/>
<rect x="541.45" y="325.0" width="3.4" height="2.6" fill="#f5525e"/>
<rect x="547.77" y="322.4" width="1.1" height="27.6" fill="#f5525e" fill-opacity="0.8"/>
<rect x="546.62" y="326.4" width="3.4" height="22.6" fill="#f5525e"/>
<rect x="552.94" y="332.7" width="1.1" height="23.3" fill="#1fc98b" fill-opacity="0.8"/>
<rect x="551.79" y="346.5" width="3.4" height="2.9" fill="#1fc98b"/>
<rect x="558.10" y="336.2" width="1.1" height="22.3" fill="#1fc98b" fill-opacity="0.8"/>
<rect x="556.95" y="343.9" width="3.4" height="3.4" fill="#1fc98b"/>
<rect x="563.27" y="331.9" width="1.1" height="16.3" fill="#1fc98b" fill-opacity="0.8"/>
<rect x="562.12" y="333.6" width="3.4" height="12.0" fill="#1fc98b"/>
<rect x="568.44" y="325.9" width="1.1" height="31.8" fill="#f5525e" fill-opacity="0.8"/>
<rect x="567.29" y="333.6" width="3.4" height="12.9" fill="#f5525e"/>
<rect x="573.60" y="336.2" width="1.1" height="24.8" fill="#f5525e" fill-opacity="0.8"/>
<rect x="572.45" y="344.8" width="3.4" height="15.4" fill="#f5525e"/>
<rect x="578.77" y="352.5" width="1.1" height="14.5" fill="#1fc98b" fill-opacity="0.8"/>
<rect x="577.62" y="353.4" width="3.4" height="6.8" fill="#1fc98b"/>
<rect x="583.94" y="338.8" width="1.1" height="22.2" fill="#1fc98b" fill-opacity="0.8"/>
<rect x="582.79" y="345.6" width="3.4" height="8.6" fill="#1fc98b"/>
<rect x="589.10" y="331.0" width="1.1" height="19.8" fill="#1fc98b" fill-opacity="0.8"/>
<rect x="587.95" y="331.9" width="3.4" height="14.6" fill="#1fc98b"/>
<rect x="594.27" y="303.6" width="1.1" height="32.6" fill="#1fc98b" fill-opacity="0.8"/>
<rect x="593.12" y="305.3" width="3.4" height="27.5" fill="#1fc98b"/>
<rect x="599.44" y="301.9" width="1.1" height="26.6" fill="#f5525e" fill-opacity="0.8"/>
<rect x="598.29" y="305.3" width="3.4" height="22.4" fill="#f5525e"/>
<rect x="604.60" y="320.8" width="1.1" height="18.0" fill="#f5525e" fill-opacity="0.8"/>
<rect x="603.45" y="326.8" width="3.4" height="10.2" fill="#f5525e"/>
<rect x="609.77" y="330.2" width="1.1" height="22.1" fill="#f5525e" fill-opacity="0.8"/>
<rect x="608.62" y="334.3" width="3.4" height="12.9" fill="#f5525e"/>
<rect x="614.94" y="346.6" width="1.1" height="18.6" fill="#f5525e" fill-opacity="0.8"/>
<rect x="613.79" y="347.2" width="3.4" height="5.1" fill="#f5525e"/>
<rect x="620.10" y="350.0" width="1.1" height="23.0" fill="#f5525e" fill-opacity="0.8"/>
<rect x="618.95" y="350.6" width="3.4" height="17.2" fill="#f5525e"/>
<rect x="625.27" y="359.2" width="1.1" height="24.1" fill="#1fc98b" fill-opacity="0.8"/>
<rect x="624.12" y="365.2" width="3.4" height="2.6" fill="#1fc98b"/>
<rect x="630.44" y="363.5" width="1.1" height="15.5" fill="#1fc98b" fill-opacity="0.8"/>
<rect x="629.28" y="364.4" width="3.4" height="2.6" fill="#1fc98b"/>
<rect x="635.60" y="340.3" width="1.1" height="26.7" fill="#1fc98b" fill-opacity="0.8"/>
<rect x="634.45" y="344.6" width="3.4" height="21.4" fill="#1fc98b"/>
<rect x="640.77" y="340.3" width="1.1" height="15.5" fill="#f5525e" fill-opacity="0.8"/>
<rect x="639.62" y="344.6" width="3.4" height="7.7" fill="#f5525e"/>
<rect x="645.93" y="326.0" width="1.1" height="29.0" fill="#1fc98b" fill-opacity="0.8"/>
<rect x="644.78" y="329.4" width="3.4" height="22.9" fill="#1fc98b"/>
<rect x="651.10" y="311.3" width="1.1" height="20.7" fill="#1fc98b" fill-opacity="0.8"/>
<rect x="649.95" y="321.6" width="3.4" height="9.4" fill="#1fc98b"/>
<rect x="656.27" y="312.2" width="1.1" height="21.5" fill="#f5525e" fill-opacity="0.8"/>
<rect x="655.12" y="321.6" width="3.4" height="10.4" fill="#f5525e"/>
<rect x="661.43" y="320.0" width="1.1" height="19.7" fill="#1fc98b" fill-opacity="0.8"/>
<rect x="660.28" y="321.6" width="3.4" height="10.4" fill="#1fc98b"/>
<rect x="666.60" y="321.6" width="1.1" height="12.1" fill="#f5525e" fill-opacity="0.8"/>
<rect x="665.45" y="322.0" width="3.4" height="2.2" fill="#f5525e"/>
<rect x="671.77" y="318.2" width="1.1" height="29.2" fill="#f5525e" fill-opacity="0.8"/>
<rect x="670.62" y="323.9" width="3.4" height="15.6" fill="#f5525e"/>
<rect x="676.93" y="336.2" width="1.1" height="21.4" fill="#f5525e" fill-opacity="0.8"/>
<rect x="675.78" y="336.9" width="3.4" height="12.9" fill="#f5525e"/>
<rect x="682.10" y="306.2" width="1.1" height="50.5" fill="#1fc98b" fill-opacity="0.8"/>
<rect x="680.95" y="323.4" width="3.4" height="26.6" fill="#1fc98b"/>
<rect x="687.27" y="312.2" width="1.1" height="14.6" fill="#1fc98b" fill-opacity="0.8"/>
<rect x="686.12" y="313.0" width="3.4" height="12.0" fill="#1fc98b"/>
<rect x="692.43" y="303.6" width="1.1" height="23.2" fill="#1fc98b" fill-opacity="0.8"/>
<rect x="691.28" y="307.9" width="3.4" height="6.0" fill="#1fc98b"/>
<rect x="697.60" y="299.3" width="1.1" height="19.7" fill="#f5525e" fill-opacity="0.8"/>
<rect x="696.45" y="307.9" width="3.4" height="10.3" fill="#f5525e"/>
<rect x="702.77" y="311.3" width="1.1" height="12.9" fill="#1fc98b" fill-opacity="0.8"/>
<rect x="701.62" y="314.8" width="3.4" height="3.4" fill="#1fc98b"/>
<rect x="707.93" y="288.0" width="1.1" height="30.2" fill="#1fc98b" fill-opacity="0.8"/>
<rect x="706.78" y="291.6" width="3.4" height="25.7" fill="#1fc98b"/>
<rect x="713.10" y="284.7" width="1.1" height="14.6" fill="#1fc98b" fill-opacity="0.8"/>
<rect x="711.95" y="285.5" width="3.4" height="7.8" fill="#1fc98b"/>
<rect x="718.27" y="269.2" width="1.1" height="30.1" fill="#1fc98b" fill-opacity="0.8"/>
<rect x="717.12" y="270.6" width="3.4" height="16.7" fill="#1fc98b"/>
<rect x="723.43" y="245.0" width="1.1" height="27.7" fill="#1fc98b" fill-opacity="0.8"/>
<rect x="722.28" y="261.5" width="3.4" height="10.3" fill="#1fc98b"/>
<rect x="728.60" y="261.5" width="1.1" height="24.0" fill="#f5525e" fill-opacity="0.8"/>
<rect x="727.45" y="262.0" width="3.4" height="20.0" fill="#f5525e"/>
<rect x="733.77" y="276.0" width="1.1" height="16.4" fill="#f5525e" fill-opacity="0.8"/>
<rect x="732.62" y="280.4" width="3.4" height="7.6" fill="#f5525e"/>
<rect x="738.93" y="286.4" width="1.1" height="24.1" fill="#f5525e" fill-opacity="0.8"/>
<rect x="737.78" y="286.4" width="3.4" height="22.4" fill="#f5525e"/>
<rect x="744.10" y="302.7" width="1.1" height="18.1" fill="#1fc98b" fill-opacity="0.8"/>
<rect x="742.95" y="306.2" width="3.4" height="1.7" fill="#1fc98b"/>
<rect x="749.26" y="300.0" width="1.1" height="20.0" fill="#f5525e" fill-opacity="0.8"/>
<rect x="748.11" y="306.2" width="3.4" height="7.8" fill="#f5525e"/>
<rect x="754.43" y="305.3" width="1.1" height="18.1" fill="#1fc98b" fill-opacity="0.8"/>
<rect x="753.28" y="309.6" width="3.4" height="3.4" fill="#1fc98b"/>
<rect x="759.60" y="308.8" width="1.1" height="30.9" fill="#f5525e" fill-opacity="0.8"/>
<rect x="758.45" y="308.8" width="3.4" height="23.2" fill="#f5525e"/>
<rect x="764.76" y="330.2" width="1.1" height="19.6" fill="#f5525e" fill-opacity="0.8"/>
<rect x="763.61" y="331.0" width="3.4" height="12.9" fill="#f5525e"/>
<rect x="769.93" y="341.2" width="1.1" height="10.3" fill="#f5525e" fill-opacity="0.8"/>
<rect x="768.78" y="342.9" width="3.4" height="4.3" fill="#f5525e"/>
<rect x="775.10" y="336.0" width="1.1" height="14.6" fill="#f5525e" fill-opacity="0.8"/>
<rect x="773.95" y="345.5" width="3.4" height="4.3" fill="#f5525e"/>
<rect x="780.26" y="348.9" width="1.1" height="27.5" fill="#f5525e" fill-opacity="0.8"/>
<rect x="779.11" y="348.9" width="3.4" height="13.8" fill="#f5525e"/>
<rect x="785.43" y="341.2" width="1.1" height="22.3" fill="#1fc98b" fill-opacity="0.8"/>
<rect x="784.28" y="341.2" width="3.4" height="17.2" fill="#1fc98b"/>
<rect x="790.60" y="341.2" width="1.1" height="13.8" fill="#f5525e" fill-opacity="0.8"/>
<rect x="789.45" y="341.2" width="3.4" height="13.8" fill="#f5525e"/>
<rect x="795.76" y="350.6" width="1.1" height="21.4" fill="#f5525e" fill-opacity="0.8"/>
<rect x="794.61" y="352.3" width="3.4" height="16.4" fill="#f5525e"/>
<rect x="800.93" y="363.5" width="1.1" height="35.2" fill="#f5525e" fill-opacity="0.8"/>
<rect x="799.78" y="366.0" width="3.4" height="29.3" fill="#f5525e"/>
<rect x="806.10" y="383.3" width="1.1" height="18.7" fill="#1fc98b" fill-opacity="0.8"/>
<rect x="804.95" y="385.0" width="3.4" height="8.6" fill="#1fc98b"/>
<rect x="811.26" y="378.8" width="1.1" height="11.2" fill="#f5525e" fill-opacity="0.8"/>
<rect x="810.11" y="380.5" width="3.4" height="7.8" fill="#f5525e"/>
<rect x="816.43" y="386.6" width="1.1" height="30.0" fill="#f5525e" fill-opacity="0.8"/>
<rect x="815.28" y="386.6" width="3.4" height="21.4" fill="#f5525e"/>
<rect x="821.60" y="395.0" width="1.1" height="19.0" fill="#1fc98b" fill-opacity="0.8"/>
<rect x="820.45" y="405.5" width="3.4" height="2.5" fill="#1fc98b"/>
<rect x="826.76" y="390.0" width="1.1" height="28.0" fill="#1fc98b" fill-opacity="0.8"/>
<rect x="825.61" y="404.6" width="3.4" height="2.6" fill="#1fc98b"/>
<rect x="831.93" y="396.0" width="1.1" height="64.5" fill="#1fc98b" fill-opacity="0.8"/>
<rect x="830.78" y="402.0" width="3.4" height="2.6" fill="#1fc98b"/>
<rect x="837.10" y="360.0" width="1.1" height="44.0" fill="#1fc98b" fill-opacity="0.8"/>
<rect x="835.94" y="372.0" width="3.4" height="31.8" fill="#1fc98b"/>
<rect x="842.26" y="360.8" width="1.1" height="27.5" fill="#f5525e" fill-opacity="0.8"/>
<rect x="841.11" y="372.0" width="3.4" height="9.4" fill="#f5525e"/>
<rect x="847.43" y="379.7" width="1.1" height="38.3" fill="#f5525e" fill-opacity="0.8"/>
<rect x="846.28" y="379.7" width="3.4" height="32.6" fill="#f5525e"/>
<rect x="852.59" y="411.5" width="1.1" height="36.5" fill="#f5525e" fill-opacity="0.8"/>
<rect x="851.44" y="411.5" width="3.4" height="17.2" fill="#f5525e"/>
<rect x="857.76" y="408.0" width="1.1" height="38.7" fill="#f5525e" fill-opacity="0.8"/>
<rect x="856.61" y="427.0" width="3.4" height="2.0" fill="#f5525e"/>
<rect x="862.93" y="408.0" width="1.1" height="38.7" fill="#f5525e" fill-opacity="0.8"/>
<rect x="861.78" y="427.8" width="3.4" height="6.9" fill="#f5525e"/>
<rect x="868.09" y="427.8" width="1.1" height="30.9" fill="#f5525e" fill-opacity="0.8"/>
<rect x="866.94" y="433.0" width="3.4" height="16.3" fill="#f5525e"/>
<rect x="873.26" y="444.0" width="1.1" height="30.0" fill="#f5525e" fill-opacity="0.8"/>
<rect x="872.11" y="447.6" width="3.4" height="1.7" fill="#f5525e"/>
<rect x="878.43" y="439.0" width="1.1" height="25.0" fill="#f5525e" fill-opacity="0.8"/>
<rect x="877.28" y="448.4" width="3.4" height="7.6" fill="#f5525e"/>
<rect x="883.59" y="438.0" width="1.1" height="31.0" fill="#1fc98b" fill-opacity="0.8"/>
<rect x="882.44" y="445.9" width="3.4" height="10.1" fill="#1fc98b"/>
<rect x="888.76" y="441.5" width="1.1" height="21.5" fill="#f5525e" fill-opacity="0.8"/>
<rect x="887.61" y="445.9" width="3.4" height="14.6" fill="#f5525e"/>
<rect x="893.93" y="441.5" width="1.1" height="24.1" fill="#1fc98b" fill-opacity="0.8"/>
<rect x="892.78" y="457.9" width="3.4" height="2.6" fill="#1fc98b"/>
<rect x="899.09" y="457.9" width="1.1" height="37.8" fill="#f5525e" fill-opacity="0.8"/>
<rect x="897.94" y="457.9" width="3.4" height="37.8" fill="#f5525e"/>
<rect x="904.26" y="464.0" width="1.1" height="33.4" fill="#1fc98b" fill-opacity="0.8"/>
<rect x="903.11" y="476.0" width="3.4" height="19.7" fill="#1fc98b"/>
<rect x="909.43" y="456.0" width="1.1" height="31.0" fill="#1fc98b" fill-opacity="0.8"/>
<rect x="908.28" y="461.3" width="3.4" height="16.4" fill="#1fc98b"/>
<rect x="914.59" y="441.6" width="1.1" height="20.4" fill="#1fc98b" fill-opacity="0.8"/>
<rect x="913.44" y="441.6" width="3.4" height="20.4" fill="#1fc98b"/>
<rect x="919.76" y="439.0" width="1.1" height="19.8" fill="#f5525e" fill-opacity="0.8"/>
<rect x="918.61" y="440.7" width="3.4" height="12.9" fill="#f5525e"/>
<rect x="924.93" y="432.0" width="1.1" height="23.3" fill="#1fc98b" fill-opacity="0.8"/>
<rect x="923.78" y="439.8" width="3.4" height="13.8" fill="#1fc98b"/>
<rect x="930.09" y="437.0" width="1.1" height="18.3" fill="#f5525e" fill-opacity="0.8"/>
<rect x="928.94" y="439.8" width="3.4" height="6.9" fill="#f5525e"/>
<rect x="935.26" y="423.5" width="1.1" height="27.5" fill="#1fc98b" fill-opacity="0.8"/>
<rect x="934.11" y="426.0" width="3.4" height="19.9" fill="#1fc98b"/>
<rect x="940.43" y="425.0" width="1.1" height="20.9" fill="#f5525e" fill-opacity="0.8"/>
<rect x="939.27" y="426.0" width="3.4" height="13.8" fill="#f5525e"/>
<rect x="945.59" y="417.5" width="1.1" height="25.8" fill="#1fc98b" fill-opacity="0.8"/>
<rect x="944.44" y="421.0" width="3.4" height="18.8" fill="#1fc98b"/>
<rect x="950.76" y="414.0" width="1.1" height="25.8" fill="#f5525e" fill-opacity="0.8"/>
<rect x="949.61" y="421.0" width="3.4" height="12.8" fill="#f5525e"/>
<rect x="955.92" y="433.0" width="1.1" height="20.6" fill="#f5525e" fill-opacity="0.8"/>
<rect x="954.77" y="433.0" width="3.4" height="6.0" fill="#f5525e"/>
<rect x="961.09" y="424.4" width="1.1" height="15.4" fill="#1fc98b" fill-opacity="0.8"/>
<rect x="959.94" y="433.8" width="3.4" height="5.2" fill="#1fc98b"/>
<rect x="966.26" y="426.0" width="1.1" height="30.2" fill="#f5525e" fill-opacity="0.8"/>
<rect x="965.11" y="433.8" width="3.4" height="21.5" fill="#f5525e"/>
<rect x="971.42" y="444.0" width="1.1" height="59.4" fill="#1fc98b" fill-opacity="0.8"/>
<rect x="970.27" y="444.0" width="3.4" height="10.5" fill="#1fc98b"/>
<rect x="976.59" y="433.8" width="1.1" height="25.8" fill="#f5525e" fill-opacity="0.8"/>
<rect x="975.44" y="444.0" width="3.4" height="8.7" fill="#f5525e"/>
<rect x="981.76" y="448.4" width="1.1" height="36.1" fill="#f5525e" fill-opacity="0.8"/>
<rect x="980.61" y="451.9" width="3.4" height="7.7" fill="#f5525e"/>
<rect x="986.92" y="438.0" width="1.1" height="33.6" fill="#1fc98b" fill-opacity="0.8"/>
<rect x="985.77" y="439.8" width="3.4" height="19.8" fill="#1fc98b"/>
<rect x="992.09" y="427.0" width="1.1" height="19.7" fill="#f5525e" fill-opacity="0.8"/>
<rect x="990.94" y="439.8" width="3.4" height="2.6" fill="#f5525e"/>
<rect x="997.26" y="442.4" width="1.1" height="31.6" fill="#f5525e" fill-opacity="0.8"/>
<rect x="996.11" y="442.4" width="3.4" height="21.6" fill="#f5525e"/>
<rect x="1002.42" y="445.9" width="1.1" height="21.4" fill="#1fc98b" fill-opacity="0.8"/>
<rect x="1001.27" y="447.6" width="3.4" height="16.3" fill="#1fc98b"/>
<rect x="1007.59" y="438.0" width="1.1" height="18.0" fill="#f5525e" fill-opacity="0.8"/>
<rect x="1006.44" y="447.6" width="3.4" height="6.9" fill="#f5525e"/>
<rect x="1012.76" y="442.4" width="1.1" height="12.6" fill="#f5525e" fill-opacity="0.8"/>
<rect x="1011.61" y="453.6" width="3.4" height="1.4" fill="#f5525e"/>
<rect x="1017.92" y="451.9" width="1.1" height="25.8" fill="#f5525e" fill-opacity="0.8"/>
<rect x="1016.77" y="453.6" width="3.4" height="15.4" fill="#f5525e"/>
<rect x="1023.09" y="445.0" width="1.1" height="27.5" fill="#1fc98b" fill-opacity="0.8"/>
<rect x="1021.94" y="446.7" width="3.4" height="22.3" fill="#1fc98b"/>
<rect x="1028.26" y="440.7" width="1.1" height="18.1" fill="#f5525e" fill-opacity="0.8"/>
<rect x="1027.11" y="447.6" width="3.4" height="1.7" fill="#f5525e"/>
<rect x="1033.42" y="441.6" width="1.1" height="12.0" fill="#1fc98b" fill-opacity="0.8"/>
<rect x="1032.27" y="442.4" width="3.4" height="6.9" fill="#1fc98b"/>
<rect x="1038.59" y="440.7" width="1.1" height="14.6" fill="#f5525e" fill-opacity="0.8"/>
<rect x="1037.44" y="442.4" width="3.4" height="12.1" fill="#f5525e"/>
<rect x="1043.76" y="446.7" width="1.1" height="18.1" fill="#f5525e" fill-opacity="0.8"/>
<rect x="1042.61" y="452.7" width="3.4" height="12.1" fill="#f5525e"/>
<rect x="1048.92" y="441.6" width="1.1" height="23.2" fill="#1fc98b" fill-opacity="0.8"/>
<rect x="1047.77" y="447.6" width="3.4" height="16.3" fill="#1fc98b"/>
<rect x="1054.09" y="447.6" width="1.1" height="19.7" fill="#f5525e" fill-opacity="0.8"/>
<rect x="1052.94" y="447.6" width="3.4" height="14.6" fill="#f5525e"/>
<rect x="1059.25" y="451.9" width="1.1" height="18.1" fill="#f5525e" fill-opacity="0.8"/>
<rect x="1058.10" y="461.3" width="3.4" height="7.7" fill="#f5525e"/>
<rect x="1064.42" y="433.8" width="1.1" height="36.2" fill="#1fc98b" fill-opacity="0.8"/>
<rect x="1063.27" y="445.0" width="3.4" height="24.0" fill="#1fc98b"/>
<rect x="1069.59" y="439.0" width="1.1" height="16.3" fill="#f5525e" fill-opacity="0.8"/>
<rect x="1068.44" y="444.0" width="3.4" height="2.7" fill="#f5525e"/>
<rect x="1074.75" y="433.0" width="1.1" height="18.9" fill="#1fc98b" fill-opacity="0.8"/>
<rect x="1073.60" y="438.0" width="3.4" height="8.7" fill="#1fc98b"/>
<rect x="1079.92" y="420.0" width="1.1" height="23.3" fill="#1fc98b" fill-opacity="0.8"/>
<rect x="1078.77" y="428.7" width="3.4" height="10.3" fill="#1fc98b"/>
<rect x="1085.09" y="417.5" width="1.1" height="21.5" fill="#f5525e" fill-opacity="0.8"/>
<rect x="1083.94" y="428.7" width="3.4" height="3.3" fill="#f5525e"/>
<rect x="1090.25" y="424.4" width="1.1" height="14.6" fill="#1fc98b" fill-opacity="0.8"/>
<rect x="1089.10" y="425.2" width="3.4" height="6.8" fill="#1fc98b"/>
<rect x="1095.42" y="425.2" width="1.1" height="28.4" fill="#f5525e" fill-opacity="0.8"/>
<rect x="1094.27" y="425.2" width="3.4" height="26.7" fill="#f5525e"/>
<rect x="1100.59" y="425.2" width="1.1" height="28.4" fill="#1fc98b" fill-opacity="0.8"/>
<rect x="1099.44" y="425.2" width="3.4" height="25.8" fill="#1fc98b"/>
<rect x="1105.75" y="420.0" width="1.1" height="17.3" fill="#f5525e" fill-opacity="0.8"/>
<rect x="1104.60" y="424.4" width="3.4" height="12.9" fill="#f5525e"/>
<rect x="1110.92" y="422.7" width="1.1" height="17.1" fill="#1fc98b" fill-opacity="0.8"/>
<rect x="1109.77" y="428.7" width="3.4" height="8.6" fill="#1fc98b"/>
<rect x="1116.09" y="428.7" width="1.1" height="18.9" fill="#f5525e" fill-opacity="0.8"/>
<rect x="1114.94" y="428.7" width="3.4" height="13.7" fill="#f5525e"/>
<rect x="1121.25" y="436.4" width="1.1" height="15.5" fill="#f5525e" fill-opacity="0.8"/>
<rect x="1120.10" y="440.7" width="3.4" height="9.5" fill="#f5525e"/>
<rect x="1126.42" y="425.2" width="1.1" height="25.0" fill="#1fc98b" fill-opacity="0.8"/>
<rect x="1125.27" y="428.7" width="3.4" height="20.6" fill="#1fc98b"/>
<rect x="1131.59" y="423.5" width="1.1" height="6.9" fill="#1fc98b" fill-opacity="0.8"/>
<rect x="1130.44" y="425.2" width="3.4" height="4.3" fill="#1fc98b"/>
<rect x="1136.75" y="425.2" width="1.1" height="24.1" fill="#f5525e" fill-opacity="0.8"/>
<rect x="1135.60" y="425.2" width="3.4" height="22.4" fill="#f5525e"/>
<rect x="1141.92" y="445.0" width="1.1" height="15.5" fill="#f5525e" fill-opacity="0.8"/>
<rect x="1140.77" y="445.9" width="3.4" height="13.7" fill="#f5525e"/>
<rect x="1147.09" y="453.6" width="1.1" height="12.9" fill="#1fc98b" fill-opacity="0.8"/>
<rect x="1145.93" y="454.5" width="3.4" height="4.2" fill="#1fc98b"/>
<rect x="1152.25" y="451.0" width="1.1" height="12.9" fill="#1fc98b" fill-opacity="0.8"/>
<rect x="1151.10" y="451.9" width="3.4" height="3.1" fill="#1fc98b"/>
</g>
<circle cx="1076.3" cy="577.5" r="13" fill="#fff"/>
<circle cx="1099.5" cy="579.2" r="9.5" fill="#fff"/>
<circle cx="1115" cy="582.6" r="10" fill="#fff"/>
<circle cx="1133" cy="579" r="12" fill="#fff"/>
<circle cx="1146" cy="584.4" r="10.5" fill="#fff"/>
<circle cx="1088" cy="578" r="8" fill="#fff"/>
<circle cx="1124" cy="581" r="9" fill="#fff"/>
<circle cx="1141" cy="582" r="9" fill="#fff"/>
<rect x="116" y="150" width="24" height="455" fill="url(#vir)"/>
<rect x="165.4" y="615.4" width="991.6" height="49.3" fill="#eaeffb"/>
<path d="M165.6,664.7 L165.6,627.4 L165.6,627.4 L166.0,633.7 L171.2,632.4 L176.3,632.3 L181.5,636.7 L186.7,642.3 L191.8,641.9 L197.0,643.2 L202.2,642.4 L207.3,645.7 L212.5,645.9 L217.7,644.6 L222.8,642.1 L228.0,639.9 L233.2,641.3 L238.3,638.2 L243.5,636.8 L248.7,635.2 L253.8,638.1 L259.0,642.3 L264.2,645.3 L269.3,645.0 L274.5,644.1 L279.7,638.5 L284.8,638.0 L290.0,640.1 L295.2,640.7 L300.3,642.3 L305.5,643.5 L310.7,646.0 L315.8,646.5 L321.0,646.2 L326.2,645.3 L331.3,647.5 L336.5,645.1 L341.7,641.6 L346.8,640.3 L352.0,639.9 L357.2,643.2 L362.3,644.9 L367.5,642.1 L372.7,637.4 L377.8,633.0 L383.0,632.0 L388.2,629.9 L393.3,630.5 L398.5,633.4 L403.7,630.8 L408.8,631.6 L414.0,631.3 L419.2,632.9 L424.3,630.3 L429.5,632.2 L434.7,634.0 L439.8,633.0 L445.0,632.2 L450.2,632.1 L455.3,640.4 L460.5,637.3 L465.7,638.5 L470.8,637.0 L476.0,635.2 L481.2,634.6 L486.3,637.0 L491.5,634.8 L496.7,635.8 L501.8,635.4 L507.0,632.9 L512.2,634.8 L517.3,634.9 L522.5,635.4 L527.7,633.4 L532.8,633.9 L538.0,634.0 L543.2,634.3 L548.3,637.1 L553.5,636.7 L558.7,636.4 L563.8,635.0 L569.0,636.7 L574.2,638.5 L579.3,637.6 L584.5,636.6 L589.7,634.8 L594.8,631.4 L600.0,634.3 L605.2,635.5 L610.3,636.8 L615.5,637.5 L620.7,639.5 L625.8,639.2 L631.0,639.1 L636.2,636.5 L641.3,637.5 L646.5,634.5 L651.7,633.5 L656.8,634.8 L662.0,633.5 L667.2,633.8 L672.3,635.8 L677.5,637.2 L682.6,633.7 L687.8,632.4 L693.0,631.7 L698.1,633.0 L703.3,632.6 L708.5,629.6 L713.6,628.8 L718.8,626.8 L724.0,625.6 L729.1,628.3 L734.3,629.1 L739.5,631.8 L744.6,631.5 L749.8,632.5 L755.0,631.9 L760.1,634.8 L765.3,636.4 L770.5,636.8 L775.6,637.2 L780.8,638.8 L786.0,636.0 L791.1,637.8 L796.3,639.6 L801.5,643.1 L806.6,641.8 L811.8,642.2 L817.0,644.8 L822.1,644.4 L827.3,644.3 L832.5,644.0 L837.6,640.1 L842.8,641.3 L848.0,645.3 L853.1,647.5 L858.3,647.5 L863.5,648.2 L868.6,650.1 L873.8,650.1 L879.0,651.0 L884.1,649.7 L889.3,651.6 L894.5,651.3 L899.6,656.2 L904.8,653.6 L910.0,651.7 L915.1,649.1 L920.3,650.7 L925.5,648.9 L930.6,649.8 L935.8,647.1 L941.0,648.9 L946.1,646.5 L951.3,648.1 L956.5,648.8 L961.6,648.1 L966.8,650.9 L972.0,649.5 L977.1,650.6 L982.3,651.5 L987.5,648.9 L992.6,649.2 L997.8,652.1 L1003.0,649.9 L1008.1,650.8 L1013.3,650.9 L1018.5,652.7 L1023.6,649.8 L1028.8,650.1 L1034.0,649.2 L1039.1,650.8 L1044.3,652.2 L1049.5,649.9 L1054.6,651.8 L1059.8,652.7 L1065.0,649.6 L1070.1,649.8 L1075.3,648.7 L1080.5,647.5 L1085.6,647.9 L1090.8,647.0 L1096.0,650.5 L1101.1,647.0 L1106.3,648.6 L1111.5,647.5 L1116.6,649.2 L1121.8,650.3 L1127.0,647.5 L1132.1,647.0 L1137.3,649.9 L1142.5,651.5 L1147.6,650.8 L1152.8,650.5 L1157,650.5 L1157,664.7 Z" fill="#d5e0f8"/>
<path d="M165.6,627.4 L166.0,633.7 L171.2,632.4 L176.3,632.3 L181.5,636.7 L186.7,642.3 L191.8,641.9 L197.0,643.2 L202.2,642.4 L207.3,645.7 L212.5,645.9 L217.7,644.6 L222.8,642.1 L228.0,639.9 L233.2,641.3 L238.3,638.2 L243.5,636.8 L248.7,635.2 L253.8,638.1 L259.0,642.3 L264.2,645.3 L269.3,645.0 L274.5,644.1 L279.7,638.5 L284.8,638.0 L290.0,640.1 L295.2,640.7 L300.3,642.3 L305.5,643.5 L310.7,646.0 L315.8,646.5 L321.0,646.2 L326.2,645.3 L331.3,647.5 L336.5,645.1 L341.7,641.6 L346.8,640.3 L352.0,639.9 L357.2,643.2 L362.3,644.9 L367.5,642.1 L372.7,637.4 L377.8,633.0 L383.0,632.0 L388.2,629.9 L393.3,630.5 L398.5,633.4 L403.7,630.8 L408.8,631.6 L414.0,631.3 L419.2,632.9 L424.3,630.3 L429.5,632.2 L434.7,634.0 L439.8,633.0 L445.0,632.2 L450.2,632.1 L455.3,640.4 L460.5,637.3 L465.7,638.5 L470.8,637.0 L476.0,635.2 L481.2,634.6 L486.3,637.0 L491.5,634.8 L496.7,635.8 L501.8,635.4 L507.0,632.9 L512.2,634.8 L517.3,634.9 L522.5,635.4 L527.7,633.4 L532.8,633.9 L538.0,634.0 L543.2,634.3 L548.3,637.1 L553.5,636.7 L558.7,636.4 L563.8,635.0 L569.0,636.7 L574.2,638.5 L579.3,637.6 L584.5,636.6 L589.7,634.8 L594.8,631.4 L600.0,634.3 L605.2,635.5 L610.3,636.8 L615.5,637.5 L620.7,639.5 L625.8,639.2 L631.0,639.1 L636.2,636.5 L641.3,637.5 L646.5,634.5 L651.7,633.5 L656.8,634.8 L662.0,633.5 L667.2,633.8 L672.3,635.8 L677.5,637.2 L682.6,633.7 L687.8,632.4 L693.0,631.7 L698.1,633.0 L703.3,632.6 L708.5,629.6 L713.6,628.8 L718.8,626.8 L724.0,625.6 L729.1,628.3 L734.3,629.1 L739.5,631.8 L744.6,631.5 L749.8,632.5 L755.0,631.9 L760.1,634.8 L765.3,636.4 L770.5,636.8 L775.6,637.2 L780.8,638.8 L786.0,636.0 L791.1,637.8 L796.3,639.6 L801.5,643.1 L806.6,641.8 L811.8,642.2 L817.0,644.8 L822.1,644.4 L827.3,644.3 L832.5,644.0 L837.6,640.1 L842.8,641.3 L848.0,645.3 L853.1,647.5 L858.3,647.5 L863.5,648.2 L868.6,650.1 L873.8,650.1 L879.0,651.0 L884.1,649.7 L889.3,651.6 L894.5,651.3 L899.6,656.2 L904.8,653.6 L910.0,651.7 L915.1,649.1 L920.3,650.7 L925.5,648.9 L930.6,649.8 L935.8,647.1 L941.0,648.9 L946.1,646.5 L951.3,648.1 L956.5,648.8 L961.6,648.1 L966.8,650.9 L972.0,649.5 L977.1,650.6 L982.3,651.5 L987.5,648.9 L992.6,649.2 L997.8,652.1 L1003.0,649.9 L1008.1,650.8 L1013.3,650.9 L1018.5,652.7 L1023.6,649.8 L1028.8,650.1 L1034.0,649.2 L1039.1,650.8 L1044.3,652.2 L1049.5,649.9 L1054.6,651.8 L1059.8,652.7 L1065.0,649.6 L1070.1,649.8 L1075.3,648.7 L1080.5,647.5 L1085.6,647.9 L1090.8,647.0 L1096.0,650.5 L1101.1,647.0 L1106.3,648.6 L1111.5,647.5 L1116.6,649.2 L1121.8,650.3 L1127.0,647.5 L1132.1,647.0 L1137.3,649.9 L1142.5,651.5 L1147.6,650.8 L1152.8,650.5" fill="none" stroke="#c9d6f5" stroke-width="1"/>
<rect x="160" y="634.5" width="12" height="13.3" rx="3.5" fill="#303542"/>
<rect x="164" y="639" width="1" height="5" fill="#cfd3da"/><rect x="167" y="639" width="1" height="5" fill="#cfd3da"/>
<rect x="1151" y="634.5" width="12" height="13.3" rx="3.5" fill="#303542"/>
<rect x="1155" y="639" width="1" height="5" fill="#cfd3da"/><rect x="1158" y="639" width="1" height="5" fill="#cfd3da"/>
<text transform="translate(128,139.8) scale(0.977,1)" text-anchor="middle" font-size="9.7" fill="#333" stroke="#333" stroke-width="0.25" font-family="Liberation Sans, sans-serif" >928.39K</text>
<text transform="translate(128,622) scale(0.977,1)" text-anchor="middle" font-size="9.7" fill="#333" stroke="#333" stroke-width="0.25" font-family="Liberation Sans, sans-serif" >0</text>
<text transform="translate(1162,138.6) scale(0.977,1)" text-anchor="start" font-size="9.7" fill="#333" stroke="#333" stroke-width="0.25" font-family="Liberation Sans, sans-serif" >24</text>
<text transform="translate(1162,213.6) scale(0.977,1)" text-anchor="start" font-size="9.7" fill="#333" stroke="#333" stroke-width="0.25" font-family="Liberation Sans, sans-serif" >23.5</text>
<text transform="translate(1162,288.7) scale(0.977,1)" text-anchor="start" font-size="9.7" fill="#333" stroke="#333" stroke-width="0.25" font-family="Liberation Sans, sans-serif" >23</text>
<text transform="translate(1162,363.7) scale(0.977,1)" text-anchor="start" font-size="9.7" fill="#333" stroke="#333" stroke-width="0.25" font-family="Liberation Sans, sans-serif" >22.5</text>
<text transform="translate(1162,438.7) scale(0.977,1)" text-anchor="start" font-size="9.7" fill="#333" stroke="#333" stroke-width="0.25" font-family="Liberation Sans, sans-serif" >22</text>
<text transform="translate(1162,513.8) scale(0.977,1)" text-anchor="start" font-size="9.7" fill="#333" stroke="#333" stroke-width="0.25" font-family="Liberation Sans, sans-serif" >21.5</text>
<text transform="translate(1162,588.8) scale(0.977,1)" text-anchor="start" font-size="9.7" fill="#333" stroke="#333" stroke-width="0.25" font-family="Liberation Sans, sans-serif" >21</text>
<text transform="translate(1162,610.4) scale(0.977,1)" text-anchor="start" font-size="9.7" fill="#333" stroke="#333" stroke-width="0.25" font-family="Liberation Sans, sans-serif" >20.8525</text>
<text transform="translate(166.0,621.8) scale(0.977,1)" text-anchor="middle" font-size="9.7" fill="#333" stroke="#333" stroke-width="0.25" font-family="Liberation Sans, sans-serif" >10-14 08:30</text>
<text transform="translate(233.2,621.8) scale(0.977,1)" text-anchor="middle" font-size="9.7" fill="#333" stroke="#333" stroke-width="0.25" font-family="Liberation Sans, sans-serif" >10-14 11:45</text>
<text transform="translate(300.3,621.8) scale(0.977,1)" text-anchor="middle" font-size="9.7" fill="#333" stroke="#333" stroke-width="0.25" font-family="Liberation Sans, sans-serif" >10-14 15:00</text>
<text transform="translate(367.5,621.8) scale(0.977,1)" text-anchor="middle" font-size="9.7" fill="#333" stroke="#333" stroke-width="0.25" font-family="Liberation Sans, sans-serif" >10-14 18:15</text>
<text transform="translate(434.7,621.8) scale(0.977,1)" text-anchor="middle" font-size="9.7" fill="#333" stroke="#333" stroke-width="0.25" font-family="Liberation Sans, sans-serif" >10-14 21:30</text>
<text transform="translate(501.8,621.8) scale(0.977,1)" text-anchor="middle" font-size="9.7" fill="#333" stroke="#333" stroke-width="0.25" font-family="Liberation Sans, sans-serif" >10-15 00:45</text>
<text transform="translate(569.0,621.8) scale(0.977,1)" text-anchor="middle" font-size="9.7" fill="#333" stroke="#333" stroke-width="0.25" font-family="Liberation Sans, sans-serif" >10-15 04:00</text>
<text transform="translate(636.2,621.8) scale(0.977,1)" text-anchor="middle" font-size="9.7" fill="#333" stroke="#333" stroke-width="0.25" font-family="Liberation Sans, sans-serif" >10-15 07:15</text>
<text transform="translate(703.3,621.8) scale(0.977,1)" text-anchor="middle" font-size="9.7" fill="#333" stroke="#333" stroke-width="0.25" font-family="Liberation Sans, sans-serif" >10-15 10:30</text>
<text transform="translate(770.5,621.8) scale(0.977,1)" text-anchor="middle" font-size="9.7" fill="#333" stroke="#333" stroke-width="0.25" font-family="Liberation Sans, sans-serif" >10-15 13:45</text>
<text transform="translate(837.6,621.8) scale(0.977,1)" text-anchor="middle" font-size="9.7" fill="#333" stroke="#333" stroke-width="0.25" font-family="Liberation Sans, sans-serif" >10-15 17:00</text>
<text transform="translate(904.8,621.8) scale(0.977,1)" text-anchor="middle" font-size="9.7" fill="#333" stroke="#333" stroke-width="0.25" font-family="Liberation Sans, sans-serif" >10-15 20:15</text>
<text transform="translate(972.0,621.8) scale(0.977,1)" text-anchor="middle" font-size="9.7" fill="#333" stroke="#333" stroke-width="0.25" font-family="Liberation Sans, sans-serif" >10-15 23:30</text>
<text transform="translate(1039.1,621.8) scale(0.977,1)" text-anchor="middle" font-size="9.7" fill="#333" stroke="#333" stroke-width="0.25" font-family="Liberation Sans, sans-serif" >10-16 02:45</text>
<text transform="translate(1106.3,621.8) scale(0.977,1)" text-anchor="middle" font-size="9.7" fill="#333" stroke="#333" stroke-width="0.25" font-family="Liberation Sans, sans-serif" >10-16 06:00</text>
<rect x="565.7" y="102" width="8" height="8" fill="#440154"/>
<text x="578" y="109.5" text-anchor="start" font-size="10" fill="#555" font-family="Liberation Sans, sans-serif" >Плечо ликвидации</text>
<rect x="675.4" y="102" width="8" height="8" fill="#1fc98d"/>
<text x="687.7" y="109.5" text-anchor="start" font-size="10" fill="#555" font-family="Liberation Sans, sans-serif" >Суперграфики</text>
</svg>
</body></html>
